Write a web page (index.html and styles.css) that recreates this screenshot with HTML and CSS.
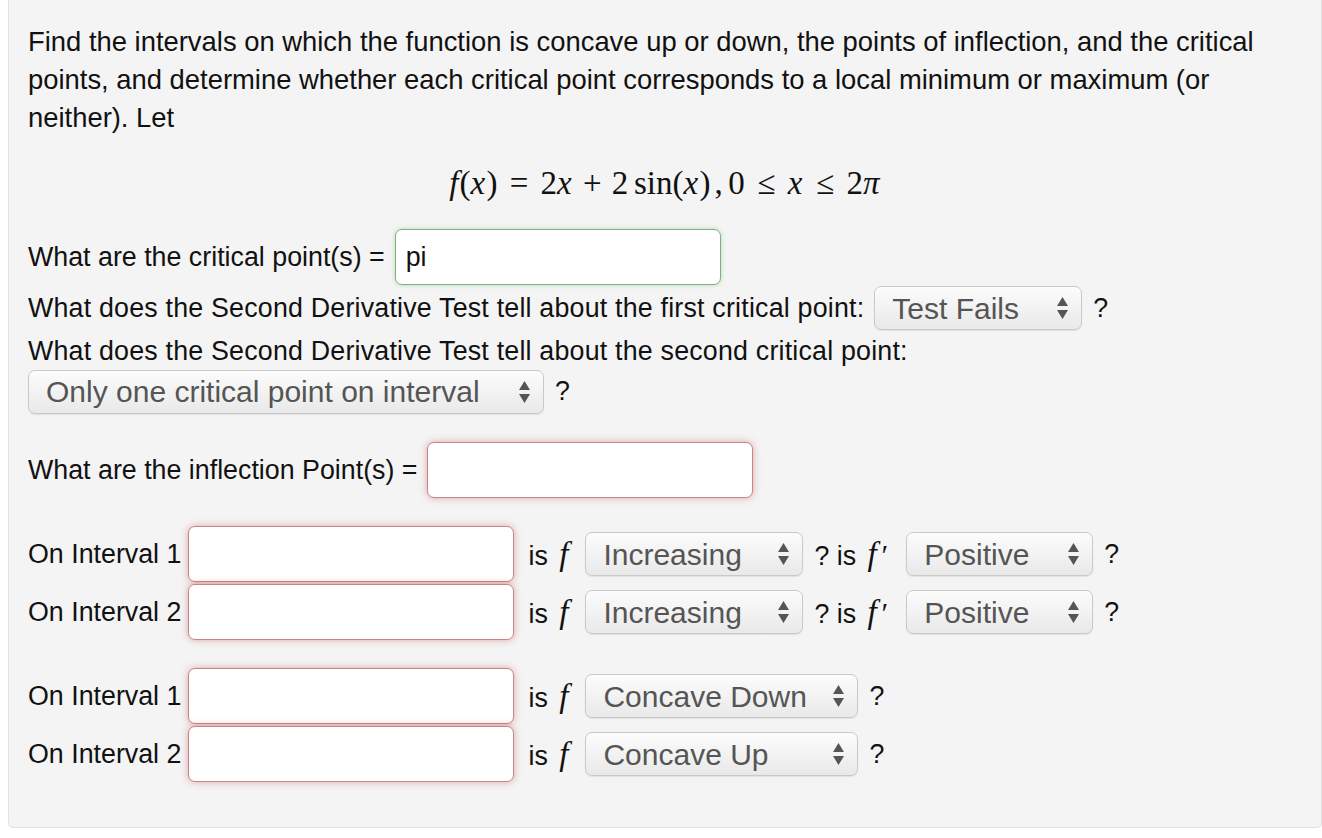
FILE: index.html
```html
<!DOCTYPE html>
<html lang="en">
<head>
    <meta charset="UTF-8">
    <title>Concavity and critical points</title>
    <link rel="stylesheet" href="styles.css">
</head>
<body>
    <div class="problem">
        <p class="intro">Find the intervals on which the function is concave up or down, the points of inflection, and the critical points, and determine whether each critical point corresponds to a local minimum or maximum (or neither). Let</p>

        <div class="formula">
            <i>f</i>(<i>x</i>)<span class="op">=</span>2<i>x</i><span class="op bin">+</span>2<span class="fn">sin</span>(<i>x</i>)<span class="punct">,</span>0<span class="op">≤</span><i>x</i><span class="op">≤</span>2<i>π</i>
        </div>

        <div class="row row-input first">
            <span class="label">What are the critical point(s) =</span>
            <input type="text" class="answer correct" value="pi">
        </div>

        <div class="row row-select">
            <span class="label long">What does the Second Derivative Test tell about the first critical point:</span>
            <span class="picker w-test">
                <select><option>Test Fails</option></select>
                <svg class="arrows" viewBox="0 0 11 22"><path d="M5.5 0 L11 9 L0 9 Z M5.5 22 L11 13 L0 13 Z"/></svg>
            </span>
            <span class="qm">?</span>
        </div>

        <div class="row row-text">
            <span class="label long">What does the Second Derivative Test tell about the second critical point:</span>
        </div>

        <div class="row row-select tight">
            <span class="picker w-only">
                <select><option>Only one critical point on interval</option></select>
                <svg class="arrows" viewBox="0 0 11 22"><path d="M5.5 0 L11 9 L0 9 Z M5.5 22 L11 13 L0 13 Z"/></svg>
            </span>
            <span class="qm">?</span>
        </div>

        <div class="row row-input spaced">
            <span class="label">What are the inflection Point(s) =</span>
            <input type="text" class="answer wrong">
        </div>

        <div class="group">
            <div class="row row-input">
                <span class="label short">On Interval 1</span>
                <input type="text" class="answer wrong">
                <span class="is">is <i>f</i></span>
                <span class="picker w-inc">
                    <select><option>Increasing</option></select>
                    <svg class="arrows" viewBox="0 0 11 22"><path d="M5.5 0 L11 9 L0 9 Z M5.5 22 L11 13 L0 13 Z"/></svg>
                </span>
                <span class="qm">? is <i>f</i><span class="prime">′</span></span>
                <span class="picker w-pos">
                    <select><option>Positive</option></select>
                    <svg class="arrows" viewBox="0 0 11 22"><path d="M5.5 0 L11 9 L0 9 Z M5.5 22 L11 13 L0 13 Z"/></svg>
                </span>
                <span class="qm">?</span>
            </div>
            <div class="row row-input">
                <span class="label short">On Interval 2</span>
                <input type="text" class="answer wrong">
                <span class="is">is <i>f</i></span>
                <span class="picker w-inc">
                    <select><option>Increasing</option></select>
                    <svg class="arrows" viewBox="0 0 11 22"><path d="M5.5 0 L11 9 L0 9 Z M5.5 22 L11 13 L0 13 Z"/></svg>
                </span>
                <span class="qm">? is <i>f</i><span class="prime">′</span></span>
                <span class="picker w-pos">
                    <select><option>Positive</option></select>
                    <svg class="arrows" viewBox="0 0 11 22"><path d="M5.5 0 L11 9 L0 9 Z M5.5 22 L11 13 L0 13 Z"/></svg>
                </span>
                <span class="qm">?</span>
            </div>
        </div>

        <div class="group">
            <div class="row row-input">
                <span class="label short">On Interval 1</span>
                <input type="text" class="answer wrong">
                <span class="is">is <i>f</i></span>
                <span class="picker w-conc">
                    <select><option>Concave Down</option></select>
                    <svg class="arrows" viewBox="0 0 11 22"><path d="M5.5 0 L11 9 L0 9 Z M5.5 22 L11 13 L0 13 Z"/></svg>
                </span>
                <span class="qm">?</span>
            </div>
            <div class="row row-input">
                <span class="label short">On Interval 2</span>
                <input type="text" class="answer wrong">
                <span class="is">is <i>f</i></span>
                <span class="picker w-conc">
                    <select><option>Concave Up</option></select>
                    <svg class="arrows" viewBox="0 0 11 22"><path d="M5.5 0 L11 9 L0 9 Z M5.5 22 L11 13 L0 13 Z"/></svg>
                </span>
                <span class="qm">?</span>
            </div>
        </div>
    </div>
</body>
</html>
```

FILE: styles.css
```css
* {
    margin: 0;
    padding: 0;
    box-sizing: border-box;
}

body {
    background-color: #ffffff;
    color: #111111;
    font-family: 'Liberation Sans', Arial, sans-serif;
    font-size: 26.8px;
}

.problem {
    margin-left: 8px;
    width: 1314px;
    height: 828px;
    padding: 23px 19px 0;
    background-color: #f4f4f4;
    border: 1px solid #e2e2e2;
    border-top: none;
    border-radius: 0 0 5px 5px;
}

.intro {
    font-size: 27.4px;
    line-height: 38px;
}

.formula {
    margin-top: 27px;
    line-height: 38px;
    text-align: center;
    font-family: 'Liberation Serif', 'Times New Roman', serif;
    font-size: 33px;
}

.formula i {
    padding-right: 0.04em;
}

.formula .op {
    display: inline-block;
    width: 0.78em;
    margin: 0 0.26em;
    text-align: center;
}

.formula .op.bin {
    margin: 0 0.2em;
}

.formula .fn {
    margin-left: 0.17em;
}

.formula .punct {
    margin: 0 0.17em 0 0.12em;
}

.row {
    display: flex;
    align-items: center;
    white-space: nowrap;
}

.row-input {
    height: 56px;
}

.row-input.first {
    margin-top: 27px;
}

.row-input.spaced {
    margin-top: 29px;
}

.row-select {
    height: 44px;
    margin-top: 1px;
}

.row-select.tight {
    height: 43px;
    margin-top: 0;
}

.row-text {
    height: 38px;
    margin-top: 2px;
}

.group {
    margin-top: 28px;
    display: flex;
    flex-direction: column;
    gap: 2px;
}

.label {
    margin-right: 10px;
}

.label.long {
    letter-spacing: 0.2px;
}

.label.short {
    margin-right: 7px;
}

.answer {
    width: 326px;
    height: 56px;
    padding: 0 10px;
    border-radius: 7px;
    background-color: #ffffff;
    font-family: 'Liberation Sans', Arial, sans-serif;
    font-size: 26.8px;
    color: #111111;
    outline: none;
}

.answer.correct {
    border: 1px solid #7cb37a;
    box-shadow: 0 0 4px rgba(90, 160, 90, 0.35);
}

.answer.wrong {
    border: 1px solid #c98585;
    box-shadow: 0 0 7px rgba(200, 90, 90, 0.5);
}

.is {
    margin: 0 17px 0 14px;
}

.is i,
.qm i {
    font-family: 'Liberation Serif', 'Times New Roman', serif;
    font-size: 33px;
    margin-left: 4px;
}

.qm .prime {
    font-family: 'Liberation Serif', 'Times New Roman', serif;
    font-style: italic;
    font-size: 30px;
    margin-left: 3px;
}

.picker {
    position: relative;
    display: inline-block;
    height: 44px;
}

.picker select {
    -webkit-appearance: none;
    appearance: none;
    width: 100%;
    height: 100%;
    padding: 0 0 0 17px;
    border: 1px solid #c9c9c9;
    border-radius: 7px;
    background: linear-gradient(to bottom, #fcfcfc, #e9e9e9);
    box-shadow: 0 1px 1px rgba(0, 0, 0, 0.08);
    font-family: 'Liberation Sans', Arial, sans-serif;
    font-size: 30px;
    color: #555555;
    outline: none;
}

.picker .arrows {
    position: absolute;
    right: 14px;
    top: 11px;
    width: 11px;
    height: 22px;
    fill: #555555;
    pointer-events: none;
}

.w-test { width: 208px; }
.w-only { width: 516px; }
.w-inc { width: 218px; }
.w-pos { width: 187px; }
.w-conc { width: 273px; }

.qm {
    margin-left: 11px;
}

.qm + .picker {
    margin-left: 20px;
}
```
